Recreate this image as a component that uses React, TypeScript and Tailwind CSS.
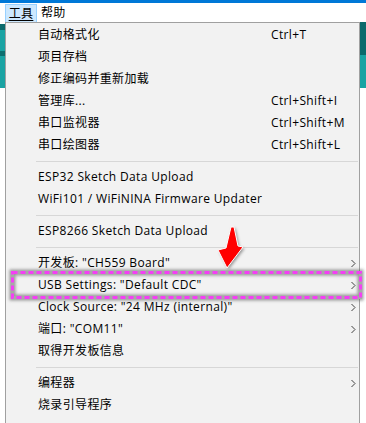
import React from "react";

type Item =
  | { kind: "item"; label: string; shortcut?: string; sub?: boolean }
  | { kind: "sep" };

const items: Item[] = [
  { kind: "item", label: "自动格式化", shortcut: "Ctrl+T" },
  { kind: "item", label: "项目存档" },
  { kind: "item", label: "修正编码并重新加载" },
  { kind: "item", label: "管理库...", shortcut: "Ctrl+Shift+I" },
  { kind: "item", label: "串口监视器", shortcut: "Ctrl+Shift+M" },
  { kind: "item", label: "串口绘图器", shortcut: "Ctrl+Shift+L" },
  { kind: "sep" },
  { kind: "item", label: "ESP32 Sketch Data Upload" },
  { kind: "item", label: "WiFi101 / WiFiNINA Firmware Updater" },
  { kind: "sep" },
  { kind: "item", label: "ESP8266 Sketch Data Upload" },
  { kind: "sep" },
  { kind: "item", label: '开发板: "CH559 Board"', sub: true },
  { kind: "item", label: 'USB Settings: "Default CDC"', sub: true },
  { kind: "item", label: 'Clock Source: "24 MHz (internal)"', sub: true },
  { kind: "item", label: '端口: "COM11"', sub: true },
  { kind: "item", label: "取得开发板信息" },
  { kind: "sep" },
  { kind: "item", label: "编程器", sub: true },
  { kind: "item", label: "烧录引导程序" },
];

function Chevron() {
  return (
    <svg width="5" height="9" viewBox="0 0 5 9" className="block mr-[1px]">
      <path d="M0.5 1 L4 4.5 L0.5 8" fill="none" stroke="#404040" strokeWidth="1" />
    </svg>
  );
}

export default function App() {
  return (
    <div
      className="relative w-[366px] h-[423px] overflow-hidden bg-white text-[12px] tracking-[0.35px] text-black"
      style={{ fontFamily: '"Open Sans", "Noto Sans CJK SC", sans-serif' }}
    >
      <div className="h-[3px] bg-[#0078d7]" />

      {/* menu bar */}
      <div className="flex h-[19px] pl-[5px]">
        <div className="mt-[1px] h-[18px] w-[32px] bg-[#cce8ff] border border-b-0 border-[#99d1ff] flex items-center justify-center">
          <span className="underline underline-offset-[2px]">工具</span>
        </div>
        <div className="flex items-center px-[4px]">帮助</div>
      </div>

      <div className="flex">
        {/* editor behind, left */}
        <div className="w-[5px] flex flex-col">
          <div className="h-[2px]" />
          <div className="h-[6px] bg-[#0b6a6c]" />
          <div className="h-[21px] bg-[#1aa3a3]" />
          <div className="h-[5px] bg-[#0d6f70]" />
          <div className="h-[32px] bg-[#1aa3a3]" />
        </div>

        {/* dropdown */}
        <div className="w-[355px] h-[410px] border border-b-0 border-[#a0a0a0] bg-[#f2f2f2] pt-[1px]">
          {items.map((it, i) =>
            it.kind === "sep" ? (
              <div key={i} className="h-[10px] flex items-center pl-[30px] pr-[1px]">
                <div className="h-px w-full bg-[#d7d7d7]" />
              </div>
            ) : (
              <div key={i} className="h-[22px] flex items-center pl-[32px] pr-[2px]">
                <div className="w-[233px] whitespace-nowrap">{it.label}</div>
                <div className="flex-1 whitespace-nowrap">{it.shortcut}</div>
                {it.sub && <Chevron />}
              </div>
            )
          )}
        </div>

        {/* editor behind, right */}
        <div className="w-[6px] flex flex-col">
          <div className="h-[33px] bg-[#0b6a6c]" />
          <div className="h-[33px] bg-[#1aa3a3]" />
        </div>
      </div>

      {/* annotation overlay */}
      <svg
        className="absolute left-0 top-0 pointer-events-none"
        width="366"
        height="423"
        viewBox="0 0 366 423"
      >
        <defs>
          <filter id="blur" x="-20%" y="-50%" width="140%" height="200%">
            <feGaussianBlur stdDeviation="1.8" />
          </filter>
        </defs>
        <rect x="12.5" y="272.5" width="348" height="25" fill="none" stroke="#5e5e5e" strokeWidth="6" opacity="0.6" filter="url(#blur)" />
        <rect x="12.5" y="272.5" width="348" height="25" fill="none" stroke="#a8a8a8" strokeWidth="3" />
        <rect x="12.5" y="272.5" width="348" height="25" fill="none" stroke="#f43ff4" strokeWidth="3" strokeDasharray="5 3" />

        <polygon
          points="231,227 234,227 238,246 243,247 227,268 218,250 226,248"
          fill="#444"
          opacity="0.55"
          filter="url(#blur)"
          transform="translate(1.5,1.5)"
        />
        <polygon
          points="231,227 234,227 238,246 243,247 227,268 218,250 226,248"
          fill="#ff0000"
          stroke="#ffffff"
          strokeWidth="1"
          strokeLinejoin="round"
        />
      </svg>
    </div>
  );
}
